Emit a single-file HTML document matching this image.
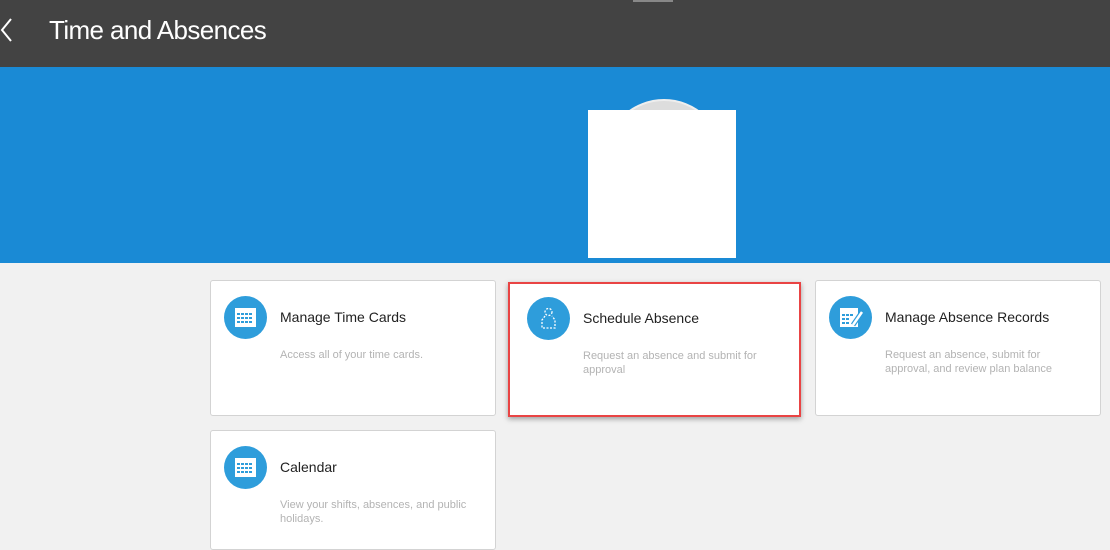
<!DOCTYPE html>
<html><head><style>
body{margin:0;width:1110px;height:538px;overflow:hidden;background:#f1f1f1;font-family:"Liberation Sans",Arial,sans-serif;position:relative}
.hdr{position:absolute;left:0;top:0;width:1110px;height:67px;background:#434343}
.hdr .t{position:absolute;left:49px;top:15px;font-size:26px;color:#fff;letter-spacing:-0.6px;font-weight:300}
.band{position:absolute;left:0;top:67px;width:1110px;height:196px;background:#1a8ad5}
.card{position:absolute;background:#fff;border:1px solid #d3d3d3;border-radius:3px;box-sizing:border-box}
.ic{position:absolute;left:13px;top:15px;width:43px;height:43px;border-radius:50%;background:#2e9ddb}
.ic svg{position:absolute;left:0;top:0}
.ti{position:absolute;left:69px;top:28px;font-size:14px;color:#222}
.de{position:absolute;left:69px;top:67px;font-size:11px;color:#b3b3b3;line-height:14px;width:200px}
</style></head><body>
<div class="hdr">
<div style="position:absolute;left:633px;top:0;width:40px;height:2px;background:#888"></div>
<svg style="position:absolute;left:0;top:17px" width="14" height="26"><path d="M11 2 L2 13 L11 24" stroke="#fff" stroke-width="2" fill="none"/></svg>
<div class="t">Time and Absences</div></div>
<div class="band"></div>
<div style="position:absolute;left:604px;top:99px;width:116px;height:116px;border-radius:50%;background:#ddd;border:2px solid #eee"></div>
<div style="position:absolute;left:588px;top:110px;width:148px;height:148px;background:#fff"></div>

<div class="card" style="left:210px;top:280px;width:286px;height:136px">
<div class="ic"><svg width="43" height="43"><rect x="11" y="12" width="21" height="19" fill="#fff"/><g fill="#2e9ddb"><rect x="13" y="17" width="3" height="2"/><rect x="17" y="17" width="3" height="2"/><rect x="21" y="17" width="3" height="2"/><rect x="25" y="17" width="3" height="2"/><rect x="13" y="21" width="3" height="2"/><rect x="17" y="21" width="3" height="2"/><rect x="21" y="21" width="3" height="2"/><rect x="25" y="21" width="3" height="2"/><rect x="13" y="25" width="3" height="2"/><rect x="17" y="25" width="3" height="2"/><rect x="21" y="25" width="3" height="2"/><rect x="25" y="25" width="3" height="2"/></g></svg></div>
<div class="ti">Manage Time Cards</div><div class="de">Access all of your time cards.</div></div>

<div class="card" style="left:508px;top:282px;width:293px;height:135px;border:2px solid #e94444;border-radius:0;box-shadow:0 2px 5px rgba(0,0,0,.35)">
<div class="ic" style="left:17px;top:13px"><svg width="43" height="43"><g fill="none" stroke="#fff" stroke-width="1.3" stroke-dasharray="2 1.5"><circle cx="21.5" cy="15" r="3.5"/><path d="M18 19 L15 23 L15 31 L28 31 L28 23 L25 19"/></g></svg></div>
<div class="ti" style="left:73px;top:26px">Schedule Absence</div><div class="de" style="left:73px;top:65px">Request an absence and submit for approval</div></div>

<div class="card" style="left:815px;top:280px;width:286px;height:136px">
<div class="ic"><svg width="43" height="43"><rect x="11" y="12" width="18" height="19" fill="#fff"/><g fill="#2e9ddb"><rect x="13" y="18" width="3" height="2"/><rect x="17" y="18" width="3" height="2"/><rect x="21" y="18" width="3" height="2"/><rect x="13" y="22" width="3" height="2"/><rect x="17" y="22" width="3" height="2"/><rect x="13" y="26" width="3" height="2"/><rect x="17" y="26" width="3" height="2"/></g><path d="M24 29 L33 16" stroke="#2e9ddb" stroke-width="5"/><path d="M24 29 L33 16" stroke="#fff" stroke-width="2.5"/></svg></div>
<div class="ti">Manage Absence Records</div><div class="de">Request an absence, submit for approval, and review plan balance</div></div>

<div class="card" style="left:210px;top:430px;width:286px;height:120px">
<div class="ic"><svg width="43" height="43"><rect x="11" y="12" width="21" height="19" fill="#fff"/><g fill="#2e9ddb"><rect x="13" y="17" width="3" height="2"/><rect x="17" y="17" width="3" height="2"/><rect x="21" y="17" width="3" height="2"/><rect x="25" y="17" width="3" height="2"/><rect x="13" y="21" width="3" height="2"/><rect x="17" y="21" width="3" height="2"/><rect x="21" y="21" width="3" height="2"/><rect x="25" y="21" width="3" height="2"/><rect x="13" y="25" width="3" height="2"/><rect x="17" y="25" width="3" height="2"/><rect x="21" y="25" width="3" height="2"/><rect x="25" y="25" width="3" height="2"/></g></svg></div>
<div class="ti">Calendar</div><div class="de">View your shifts, absences, and public holidays.</div></div>
</body></html>
